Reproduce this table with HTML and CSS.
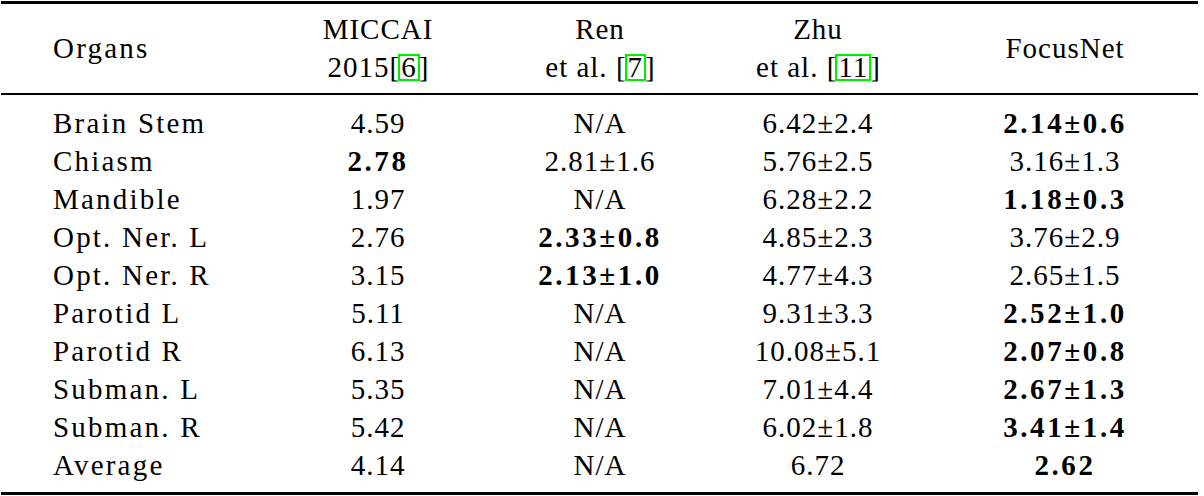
FILE: index.html
```html
<!DOCTYPE html>
<html>
<head>
<meta charset="utf-8">
<link rel="stylesheet" href="styles.css">
</head>
<body>
<div class="wrap">
<table class="res">
<colgroup>
<col class="c1"><col class="c2"><col class="c3"><col class="c4"><col class="c5">
</colgroup>
<thead>
<tr>
<th class="lft">Organs</th>
<th>MICCAI<br>2015<span class="ref">[<span class="cite">6</span>]</span></th>
<th>Ren<br>et al. <span class="ref">[<span class="cite">7</span>]</span></th>
<th>Zhu<br>et al. <span class="ref">[<span class="cite">11</span>]</span></th>
<th>FocusNet</th>
</tr>
</thead>
<tbody>
<tr class="first"><td class="lft">Brain Stem</td><td>4.59</td><td>N/A</td><td>6.42±2.4</td><td><b>2.14±0.6</b></td></tr>
<tr><td class="lft">Chiasm</td><td><b>2.78</b></td><td>2.81±1.6</td><td>5.76±2.5</td><td>3.16±1.3</td></tr>
<tr><td class="lft">Mandible</td><td>1.97</td><td>N/A</td><td>6.28±2.2</td><td><b>1.18±0.3</b></td></tr>
<tr><td class="lft">Opt. Ner. L</td><td>2.76</td><td><b>2.33±0.8</b></td><td>4.85±2.3</td><td>3.76±2.9</td></tr>
<tr><td class="lft">Opt. Ner. R</td><td>3.15</td><td><b>2.13±1.0</b></td><td>4.77±4.3</td><td>2.65±1.5</td></tr>
<tr><td class="lft">Parotid L</td><td>5.11</td><td>N/A</td><td>9.31±3.3</td><td><b>2.52±1.0</b></td></tr>
<tr><td class="lft">Parotid R</td><td>6.13</td><td>N/A</td><td>10.08±5.1</td><td><b>2.07±0.8</b></td></tr>
<tr><td class="lft">Subman. L</td><td>5.35</td><td>N/A</td><td>7.01±4.4</td><td><b>2.67±1.3</b></td></tr>
<tr><td class="lft">Subman. R</td><td>5.42</td><td>N/A</td><td>6.02±1.8</td><td><b>3.41±1.4</b></td></tr>
<tr class="last"><td class="lft">Average</td><td>4.14</td><td>N/A</td><td>6.72</td><td><b>2.62</b></td></tr>
</tbody>
</table>
</div>
</body>
</html>
```
FILE: styles.css
```css
html, body {
  margin: 0;
  padding: 0;
  background: #ffffff;
}
.wrap {
  padding: 1px 6px 0 1px;
}
.res {
  width: 1197px;
  border-collapse: collapse;
  table-layout: fixed;
  font-family: "Liberation Serif", "Times New Roman", serif;
  font-size: 29px;
  letter-spacing: 1px;
  color: #000;
  border-top: 3px solid #000;
  border-bottom: 3px solid #000;
}
.c1 { width: 259px; }
.c2 { width: 236px; }
.c3 { width: 208px; }
.c4 { width: 228px; }
.c5 { width: 266px; }
.res th {
  font-weight: normal;
  text-align: center;
  line-height: 38px;
  padding: 6px 0 7px 0;
  border-bottom: 2px solid #000;
  vertical-align: middle;
}
.res td {
  text-align: center;
  height: 38px;
  line-height: 38px;
  padding: 0;
}
.res .lft {
  text-align: left;
  padding-left: 52px;
  letter-spacing: 2.2px;
}
.res tr.first td { padding-top: 9px; }
.res tr.last td { padding-bottom: 8px; }
.res b {
  font-weight: bold;
  letter-spacing: 2.6px;
}
.ref { letter-spacing: 0; }
.cite {
  display: inline-block;
  outline: 2px solid #00ee00;
  outline-offset: -1px;
  line-height: 25px;
  padding: 0 2px;
  letter-spacing: 1px;
}
```
